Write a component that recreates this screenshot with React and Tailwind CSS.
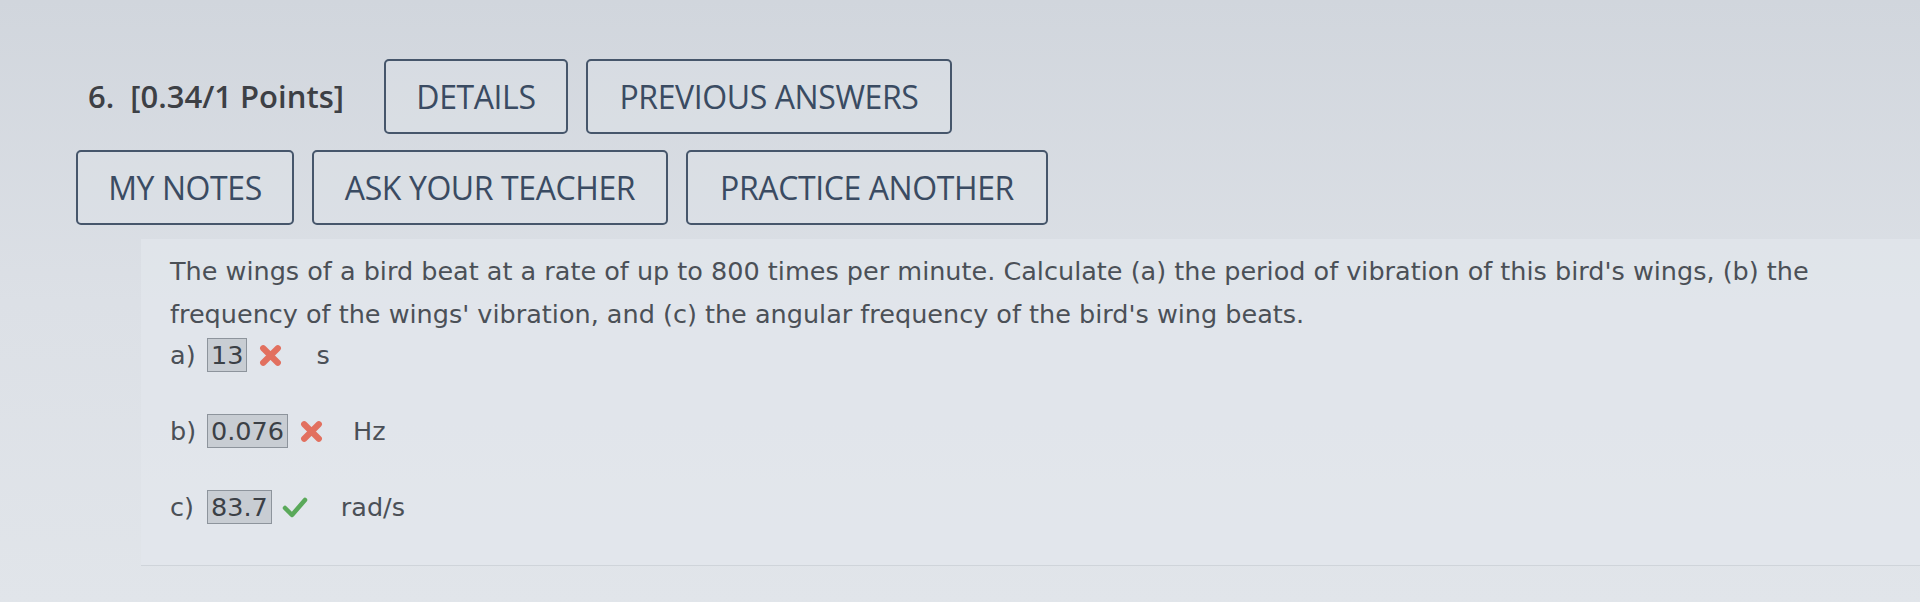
import React from 'react'

// small status icons next to each answer
function WrongMark() {
    return (
        <svg width="27" height="27" viewBox="0 0 24 24" className="shrink-0">
            <path d="M5.5 5.5L18.5 18.5M18.5 5.5L5.5 18.5" stroke="#e2705f" strokeWidth="5.5" strokeLinecap="round" />
        </svg>
    )
}

function RightMark() {
    return (
        <svg width="26" height="24" viewBox="0 0 26 24" className="shrink-0">
            <path d="M3 13L10 20L23 5" fill="none" stroke="#5aa95a" strokeWidth="4.5" strokeLinecap="round" strokeLinejoin="round" />
        </svg>
    )
}

function ActionButton({ children, width }) {
    return (
        <button
            className={`${width} h-[75px] shrink-0 rounded-[5px] border-2 border-[#46566b] bg-[#dfe3e8]/40 text-[32px] tracking-[-0.4px] text-[#3a4b62] flex items-center justify-center`}
            style={{ fontFamily: '"Open Sans", "Noto Sans", sans-serif' }}
        >
            {children}
        </button>
    )
}

function AnswerRow({ label, value, mark, unit, unitGap }) {
    return (
        <div className="h-[38px] flex items-center">
            <span className="w-[37px] shrink-0">{label}</span>
            <span className="h-[34px] shrink-0 border border-[#8d949c] bg-[#c8cdd3] flex items-center px-[3px] text-[#3b4046]">
                {value}
            </span>
            <span className="ml-[10px]">{mark}</span>
            <span className={unitGap}>{unit}</span>
        </div>
    )
}

export default function App() {
    return (
        <div className="w-[1920px] h-[602px] overflow-hidden bg-gradient-to-b from-[#d1d6dd] via-[#dce0e6] to-[#e1e5ea]">
            <div className="pt-[59px]">
                {/* first row: points + buttons */}
                <div className="flex items-center pl-[88px]">
                    <span
                        className="text-[31px] font-semibold text-[#3d4045] mr-[40px]"
                        style={{ fontFamily: '"Open Sans", "Noto Sans", sans-serif' }}
                    >
                        6.&nbsp; [0.34/1 Points]
                    </span>
                    <ActionButton width="w-[184px]">DETAILS</ActionButton>
                    <div className="w-[18px]" />
                    <ActionButton width="w-[366px]">PREVIOUS ANSWERS</ActionButton>
                </div>

                {/* second row */}
                <div className="flex items-center pl-[76px] mt-[16px] gap-[18px]">
                    <ActionButton width="w-[218px]">MY NOTES</ActionButton>
                    <ActionButton width="w-[356px]">ASK YOUR TEACHER</ActionButton>
                    <ActionButton width="w-[362px]">PRACTICE ANOTHER</ActionButton>
                </div>
            </div>

            {/* question panel */}
            <div
                className="ml-[141px] mt-[14px] h-[327px] border-b border-[#cfd4da] bg-[#e3e7ec]/70 pl-[29px] pt-[11px] text-[25.5px] text-[#4b5057]"
                style={{ fontFamily: '"DejaVu Sans", Verdana, sans-serif' }}
            >
                <p className="leading-[43px]">
                    The wings of a bird beat at a rate of up to 800 times per minute. Calculate (a) the period of vibration of this bird's wings, (b) the
                    <br />
                    frequency of the wings' vibration, and (c) the angular frequency of the bird's wing beats.
                </p>
                <div className="flex flex-col gap-[38px]">
                    <AnswerRow label="a)" value="13" mark={<WrongMark />} unit="s" unitGap="ml-[32px]" />
                    <AnswerRow label="b)" value="0.076" mark={<WrongMark />} unit="Hz" unitGap="ml-[28px]" />
                    <AnswerRow label="c)" value="83.7" mark={<RightMark />} unit="rad/s" unitGap="ml-[33px]" />
                </div>
            </div>
        </div>
    )
}
